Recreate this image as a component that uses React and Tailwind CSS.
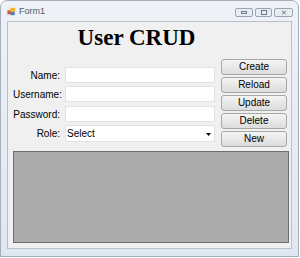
export default function App() {
  const fields = ["Name:", "Username:", "Password:"];
  const buttons = ["Create", "Reload", "Update", "Delete", "New"];

  return (
    <div className="w-[300px] h-[258px] bg-white font-['Liberation_Sans',Arial,sans-serif] text-[10px] text-black">
      <div className="w-[299px] h-[257px] flex flex-col rounded-t-[7px] border border-[#a3afbd] bg-gradient-to-b from-[#eef2f6] to-[#dfe7f0] px-[6px] pb-[7px]">
        {/* title bar */}
        <div className="h-[20px] flex items-center shrink-0">
          <svg width="9" height="9" viewBox="0 0 11 11" className="mt-[1px]">
            <rect x="0.5" y="4" width="5" height="5" fill="#d9534f" />
            <rect x="4" y="1" width="6" height="5" fill="#f0b429" />
            <rect x="4.5" y="6" width="5" height="4" fill="#4a7fc1" />
          </svg>
          <span className="ml-[3px] mt-[1px] text-[9px] text-[#505a66]">Form1</span>
          <div className="ml-auto mr-[-1px] mt-[2px] flex gap-[2px]">
            <div className="w-[18px] h-[9px] border border-[#9aa6b4] rounded-[2px] bg-[#e6ecf2] flex items-center justify-center">
              <div className="w-[6px] h-[3px] border border-[#6b7786]" />
            </div>
            <div className="w-[17px] h-[9px] border border-[#9aa6b4] rounded-[2px] bg-[#e6ecf2] flex items-center justify-center">
              <div className="w-[6px] h-[5px] border border-[#6b7786]" />
            </div>
            <div className="w-[19px] h-[9px] border border-[#9aa6b4] rounded-[2px] bg-[#e6ecf2] flex items-center justify-center text-[7px] leading-none text-[#6b7786]">
              ✕
            </div>
          </div>
        </div>

        {/* client area */}
        <div className="flex-1 flex flex-col bg-[#f0f0f0] border border-[#b6c1cd] pl-[5px] pr-[2px]">
          <div className="h-[37px] flex items-start justify-center pt-[4px] pr-[29px] shrink-0">
            <span className="font-['Liberation_Serif','Times_New_Roman',serif] font-bold text-[23px] leading-none">
              User CRUD
            </span>
          </div>

          <div className="flex items-start">
            <div className="flex flex-col pt-[8px]">
              {fields.map((f, i) => (
                <div key={f} className={`flex items-center h-[16px] ${i === 0 ? "" : i === 1 ? "mt-[3px]" : "mt-[4px]"}`}>
                  <span className="w-[47px] text-right">{f}</span>
                  <div className="ml-[5px] w-[150px] h-[16px] bg-white border border-[#e2e2e2]" />
                </div>
              ))}
              <div className="flex items-center h-[17px] mt-[3px]">
                <span className="w-[47px] text-right">Role:</span>
                <div className="ml-[5px] w-[150px] h-[17px] bg-white border border-[#e2e2e2] flex items-center pl-[1px]">
                  <span>Select</span>
                  <svg width="5" height="3" viewBox="0 0 5 3" className="ml-auto mr-[3px] mt-[1px]">
                    <path d="M0 0H5L2.5 3Z" fill="#000" />
                  </svg>
                </div>
              </div>
            </div>

            <div className="ml-[6px] flex flex-col gap-[2px]">
              {buttons.map((b) => (
                <button
                  key={b}
                  className="w-[66px] h-[16px] rounded-[3px] border border-[#a7a7a7] bg-gradient-to-b from-[#f4f4f4] to-[#dcdcdc] text-[10px] leading-none text-black flex items-center justify-center"
                >
                  {b}
                </button>
              ))}
            </div>
          </div>

          <div className="mt-[4px] mb-[5px] flex-1 bg-[#ababab] border border-[#6e6e6e]" />
        </div>
      </div>
    </div>
  );
}
